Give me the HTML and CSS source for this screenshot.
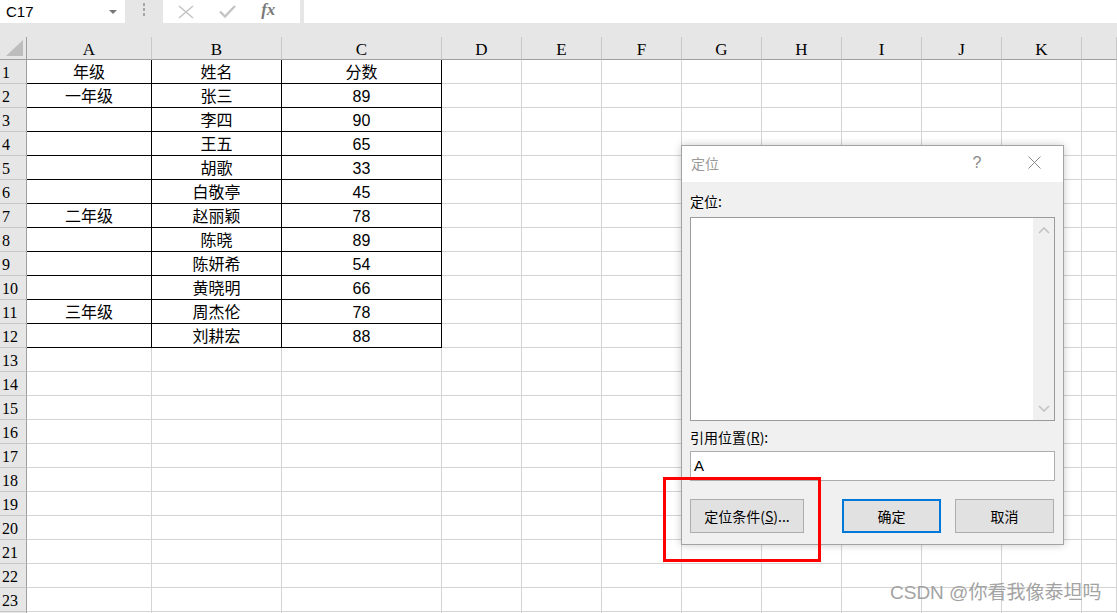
FILE: index.html
```html
<!DOCTYPE html>
<html lang="zh-CN">
<head>
    <meta charset="UTF-8">
    <title>定位</title>
    <link rel="stylesheet" href="styles.css">
</head>
<body>
    <div class="toolbar">
        <div class="name-box"><span>C17</span><span class="caret"></span></div>
        <div class="grip"><span></span><span></span><span></span></div>
        <div class="fx-box">
            <span class="fx-slot">
                <svg width="16" height="14" viewBox="0 0 16 14"><path d="M1 1 L15 13 M15 1 L1 13" stroke="#c4c4c4" stroke-width="1.6" fill="none"/></svg>
            </span>
            <span class="fx-slot">
                <svg width="17" height="13" viewBox="0 0 17 13"><path d="M1 6.5 L6 11.5 L16 1" stroke="#c4c4c4" stroke-width="2.4" fill="none"/></svg>
            </span>
            <span class="fx-slot fx">fx</span>
        </div>
        <div class="formula"></div>
    </div>

    <table class="sheet">
        <thead>
            <tr>
                <th class="w-hd corner"><svg width="17" height="16" viewBox="0 0 17 16"><polygon points="17,0 17,16 0,16" fill="#bdbdbd"/></svg></th>
                <th class="w-a">A</th><th class="w-b">B</th><th class="w-c">C</th>
                <th class="w-n">D</th><th class="w-n">E</th><th class="w-n">F</th><th class="w-n">G</th>
                <th class="w-n">H</th><th class="w-n">I</th><th class="w-n">J</th><th class="w-n">K</th>
                <th class="w-l"></th>
            </tr>
        </thead>
        <tbody>
            <tr><th>1</th><td class="b">年级</td><td class="b">姓名</td><td class="b">分数</td><td></td><td></td><td></td><td></td><td></td><td></td><td></td><td></td><td></td></tr>
            <tr><th>2</th><td class="b">一年级</td><td class="b">张三</td><td class="b">89</td><td></td><td></td><td></td><td></td><td></td><td></td><td></td><td></td><td></td></tr>
            <tr><th>3</th><td class="b"></td><td class="b">李四</td><td class="b">90</td><td></td><td></td><td></td><td></td><td></td><td></td><td></td><td></td><td></td></tr>
            <tr><th>4</th><td class="b"></td><td class="b">王五</td><td class="b">65</td><td></td><td></td><td></td><td></td><td></td><td></td><td></td><td></td><td></td></tr>
            <tr><th>5</th><td class="b"></td><td class="b">胡歌</td><td class="b">33</td><td></td><td></td><td></td><td></td><td></td><td></td><td></td><td></td><td></td></tr>
            <tr><th>6</th><td class="b"></td><td class="b">白敬亭</td><td class="b">45</td><td></td><td></td><td></td><td></td><td></td><td></td><td></td><td></td><td></td></tr>
            <tr><th>7</th><td class="b">二年级</td><td class="b">赵丽颖</td><td class="b">78</td><td></td><td></td><td></td><td></td><td></td><td></td><td></td><td></td><td></td></tr>
            <tr><th>8</th><td class="b"></td><td class="b">陈晓</td><td class="b">89</td><td></td><td></td><td></td><td></td><td></td><td></td><td></td><td></td><td></td></tr>
            <tr><th>9</th><td class="b"></td><td class="b">陈妍希</td><td class="b">54</td><td></td><td></td><td></td><td></td><td></td><td></td><td></td><td></td><td></td></tr>
            <tr><th>10</th><td class="b"></td><td class="b">黄晓明</td><td class="b">66</td><td></td><td></td><td></td><td></td><td></td><td></td><td></td><td></td><td></td></tr>
            <tr><th>11</th><td class="b">三年级</td><td class="b">周杰伦</td><td class="b">78</td><td></td><td></td><td></td><td></td><td></td><td></td><td></td><td></td><td></td></tr>
            <tr><th>12</th><td class="b"></td><td class="b">刘耕宏</td><td class="b">88</td><td></td><td></td><td></td><td></td><td></td><td></td><td></td><td></td><td></td></tr>
            <tr><th>13</th><td></td><td></td><td></td><td></td><td></td><td></td><td></td><td></td><td></td><td></td><td></td><td></td></tr>
            <tr><th>14</th><td></td><td></td><td></td><td></td><td></td><td></td><td></td><td></td><td></td><td></td><td></td><td></td></tr>
            <tr><th>15</th><td></td><td></td><td></td><td></td><td></td><td></td><td></td><td></td><td></td><td></td><td></td><td></td></tr>
            <tr><th>16</th><td></td><td></td><td></td><td></td><td></td><td></td><td></td><td></td><td></td><td></td><td></td><td></td></tr>
            <tr><th>17</th><td></td><td></td><td></td><td></td><td></td><td></td><td></td><td></td><td></td><td></td><td></td><td></td></tr>
            <tr><th>18</th><td></td><td></td><td></td><td></td><td></td><td></td><td></td><td></td><td></td><td></td><td></td><td></td></tr>
            <tr><th>19</th><td></td><td></td><td></td><td></td><td></td><td></td><td></td><td></td><td></td><td></td><td></td><td></td></tr>
            <tr><th>20</th><td></td><td></td><td></td><td></td><td></td><td></td><td></td><td></td><td></td><td></td><td></td><td></td></tr>
            <tr><th>21</th><td></td><td></td><td></td><td></td><td></td><td></td><td></td><td></td><td></td><td></td><td></td><td></td></tr>
            <tr><th>22</th><td></td><td></td><td></td><td></td><td></td><td></td><td></td><td></td><td></td><td></td><td></td><td></td></tr>
            <tr><th>23</th><td></td><td></td><td></td><td></td><td></td><td></td><td></td><td></td><td></td><td></td><td></td><td></td></tr>
            <tr><th></th><td></td><td></td><td></td><td></td><td></td><td></td><td></td><td></td><td></td><td></td><td></td><td></td></tr>
        </tbody>
    </table>

    <!-- 定位 dialog -->
    <div class="dialog">
        <div class="dlg-title">
            <span>定位</span>
            <span class="dlg-help">?</span>
            <span class="dlg-close">
                <svg width="13" height="13" viewBox="0 0 13 13"><path d="M0.5 0.5 L12.5 12.5 M12.5 0.5 L0.5 12.5" stroke="#8a8a8a" stroke-width="1" fill="none"/></svg>
            </span>
        </div>
        <div class="dlg-body">
            <div class="dlg-label">定位:</div>
            <div class="listbox">
                <div class="list-area"></div>
                <div class="list-scroll">
                    <svg width="12" height="7" viewBox="0 0 12 7"><path d="M1 6 L6 1 L11 6" stroke="#c2c2c2" stroke-width="1.6" fill="none"/></svg>
                    <svg width="12" height="7" viewBox="0 0 12 7"><path d="M1 1 L6 6 L11 1" stroke="#c2c2c2" stroke-width="1.6" fill="none"/></svg>
                </div>
            </div>
            <div class="dlg-label ref-label">引用位置(<u>R</u>):</div>
            <div class="ref-input">A</div>
            <div class="dlg-buttons">
                <button class="btn btn-wide">定位条件(<u>S</u>)...</button>
                <button class="btn btn-primary">确定</button>
                <button class="btn">取消</button>
            </div>
        </div>
    </div>

    <div class="mark"></div>
    <div class="watermark">CSDN @你看我像泰坦吗</div>
</body>
</html>
```

FILE: styles.css
```css
* {
    box-sizing: border-box;
}
body {
    margin: 0;
    width: 1117px;
    height: 613px;
    overflow: hidden;
    position: relative;
    background-color: #ffffff;
    font-family: "Liberation Sans", "Noto Sans CJK SC", sans-serif;
    color: #000;
}

/* formula bar */
.toolbar {
    display: flex;
    height: 37px;
    background-color: #e6e6e6;
    align-items: flex-start;
}
.name-box {
    width: 125px;
    height: 23px;
    background-color: #fff;
    display: flex;
    align-items: center;
    justify-content: space-between;
    padding: 0 8px 0 6px;
    font-size: 15px;
}
.caret {
    border-left: 4px solid transparent;
    border-right: 4px solid transparent;
    border-top: 4px solid #777;
}
.grip {
    width: 38px;
    height: 18px;
    display: flex;
    flex-direction: column;
    align-items: center;
    justify-content: center;
    gap: 2px;
}
.grip span {
    width: 2px;
    height: 3px;
    background-color: #a6a6a6;
}
.fx-box {
    width: 137px;
    height: 23px;
    background-color: #fff;
    display: flex;
    align-items: center;
    padding-left: 15px;
}
.fx-slot {
    width: 45px;
    display: flex;
    align-items: center;
}
.fx {
    font-family: "Liberation Serif", serif;
    font-style: italic;
    font-weight: bold;
    font-size: 17px;
    color: #7a7a7a;
    padding-left: 2px;
    margin-top: -4px;
}
.formula {
    flex: 1;
    height: 23px;
    margin-left: 4px;
    background-color: #fff;
}

/* grid */
.sheet {
    border-collapse: separate;
    border-spacing: 0;
    table-layout: fixed;
    width: 1117px;
}
.sheet th, .sheet td {
    height: 24px;
    padding: 0;
    border-right: 1px solid #d4d4d4;
    border-bottom: 1px solid #d4d4d4;
    vertical-align: bottom;
    line-height: 20px;
    font-size: 16px;
    font-weight: normal;
    text-align: center;
    white-space: nowrap;
    overflow: hidden;
}
.sheet thead th {
    height: 23px;
    background-color: #e6e6e6;
    border-right-color: #c8c8c8;
    border-bottom-color: #9e9e9e;
    font-family: "Liberation Serif", serif;
    font-size: 17px;
    line-height: 18px;
}
.sheet tbody th {
    background-color: #e6e6e6;
    border-right-color: #9e9e9e;
    border-bottom-color: #c8c8c8;
    text-align: left;
    padding-left: 2px;
    font-family: "Liberation Serif", serif;
    font-size: 16px;
}
.sheet thead th.corner {
    border-right-color: #9e9e9e;
    vertical-align: bottom;
    padding: 0 3px 3px 0;
}
.corner svg {
    display: block;
    margin-left: auto;
}
.sheet td.b {
    border-right-color: #000;
    border-bottom-color: #000;
}
.w-hd { width: 27px; }
.w-a { width: 125px; }
.w-b { width: 130px; }
.w-c { width: 160px; }
.w-n { width: 80px; }
.w-l { width: 35px; }

/* dialog */
.dialog {
    position: absolute;
    left: 681px;
    top: 145px;
    width: 383px;
    height: 400px;
    background-color: #f0f0f0;
    border: 1px solid #a3a3a3;
    box-shadow: 0 0 8px rgba(0, 0, 0, 0.22);
    font-family: "Noto Sans CJK SC", sans-serif;
    font-size: 14px;
}
.dlg-title {
    height: 36px;
    background-color: #fff;
    display: flex;
    align-items: center;
    padding: 0 0 3px 9px;
    color: #9a9a9a;
}
.dlg-help {
    margin-left: auto;
    width: 20px;
    text-align: center;
    font-family: "Liberation Sans", sans-serif;
    font-size: 16px;
    color: #8a8a8a;
}
.dlg-close {
    width: 40px;
    margin-left: 27px;
    margin-right: 9px;
    display: flex;
    justify-content: center;
}
.dlg-body {
    padding: 9px 8px 0 8px;
}
.dlg-label {
    line-height: 20px;
}
.listbox {
    margin-top: 6px;
    height: 204px;
    border: 1px solid #9a9a9a;
    background-color: #fff;
    display: flex;
}
.list-area {
    flex: 1;
}
.list-scroll {
    width: 21px;
    background-color: #f0f0f0;
    display: flex;
    flex-direction: column;
    justify-content: space-between;
    align-items: center;
    padding: 9px 0 8px;
}
.list-scroll svg {
    display: block;
}
.ref-label {
    margin-top: 6px;
}
.ref-input {
    margin-top: 4px;
    height: 30px;
    border: 1px solid #adadad;
    background-color: #fff;
    font-family: "Liberation Sans", sans-serif;
    font-size: 15px;
    line-height: 27px;
    padding-left: 3px;
}
.dlg-buttons {
    margin-top: 18px;
    display: flex;
    gap: 14px;
    padding-right: 1px;
}
.btn {
    width: 99px;
    height: 34px;
    padding: 0;
    background-color: #e1e1e1;
    border: 1px solid #adadad;
    font-family: "Noto Sans CJK SC", sans-serif;
    font-size: 14px;
    color: #000;
}
.btn-wide {
    width: 114px;
    margin-right: auto;
}
.btn-primary {
    border: 2px solid #0078d7;
}

/* annotation and watermark */
.mark {
    position: absolute;
    left: 663px;
    top: 477px;
    width: 158px;
    height: 85px;
    border: 3px solid #ff0000;
}
.watermark {
    position: absolute;
    left: 890px;
    top: 581px;
    font-size: 19px;
    line-height: 24px;
    color: #a3a3a3;
    white-space: nowrap;
}
```
